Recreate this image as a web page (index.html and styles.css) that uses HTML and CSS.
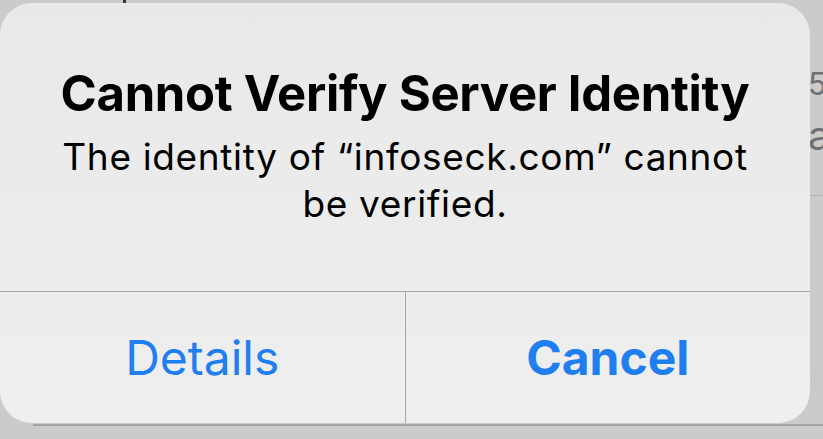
FILE: index.html
```html
<!DOCTYPE html>
<html>
<head>
<meta charset="utf-8">
<link rel="stylesheet" href="styles.css">
</head>
<body>
<div class="screen">
  <div class="behind">
    <span class="tick"></span>
    <ul class="list">
      <li class="row row-first">
        <span class="row-num">5</span>
        <span class="row-sub">a</span>
      </li>
      <li class="row row-second"></li>
    </ul>
  </div>
  <div class="alert" role="alertdialog">
    <div class="alert-content">
      <h1 class="alert-title">Cannot Verify Server Identity</h1>
      <p class="alert-message">The identity of “infoseck.com” cannot be verified.</p>
    </div>
    <div class="alert-actions">
      <button class="alert-btn">Details</button>
      <button class="alert-btn alert-btn-bold">Cancel</button>
    </div>
  </div>
</div>
</body>
</html>
```

FILE: styles.css
```css
* { box-sizing: border-box; }
html, body { margin: 0; padding: 0; }
body {
  background: #cbcbcb;
  font-family: Inter, "Liberation Sans", sans-serif;
  width: 823px;
  height: 439px;
  overflow: hidden;
}
.screen {
  position: relative;
  width: 823px;
  height: 439px;
}
.tick {
  position: absolute;
  left: 123px;
  top: 0;
  width: 3px;
  height: 3px;
  background: #333;
}
.list {
  list-style: none;
  margin: 0;
  padding: 0 0 0 33px;
}
.row {
  display: flex;
  flex-direction: column;
  padding-left: 775px;
  border-bottom: 1px solid #b3b3b3;
  color: #707070;
}
.row-first {
  height: 196px;
  padding-top: 66px;
}
.row-num { font-size: 31px; line-height: 36px; }
.row-sub { font-size: 40px; line-height: 40px; margin-top: 14px; }
.row-second {
  height: 230px;
  border-bottom: 2px solid #a3a3a3;
}
.alert {
  position: absolute;
  left: 0;
  top: 3px;
  width: 810px;
  height: 420px;
  border-radius: 32px;
  background: linear-gradient(180deg, #e9e9e9 0%, #ececec 60%, #efefef 100%);
  display: flex;
  flex-direction: column;
  overflow: hidden;
}
.alert-content {
  height: 288px;
  display: flex;
  flex-direction: column;
  align-items: center;
  padding: 63px 40px 0;
  text-align: center;
  color: #000;
}
.alert-title {
  margin: 0;
  font-size: 49px;
  font-weight: 700;
  line-height: 56px;
  letter-spacing: -0.3px;
  white-space: nowrap;
}
.alert-message {
  margin: 11px 0 0;
  width: 720px;
  font-size: 37px;
  font-weight: 400;
  line-height: 47px;
  letter-spacing: 0.65px;
}
.alert-actions {
  flex: 1;
  display: flex;
  border-top: 1px solid #a9a9a9;
}
.alert-btn {
  flex: 1;
  background: none;
  border: 0;
  padding: 0 0 1px;
  font-family: Inter, "Liberation Sans", sans-serif;
  font-size: 48px;
  font-weight: 400;
  color: #1f7ef0;
}
.alert-btn + .alert-btn {
  border-left: 1px solid #a9a9a9;
}
.alert-btn-bold { font-weight: 700; }
```
